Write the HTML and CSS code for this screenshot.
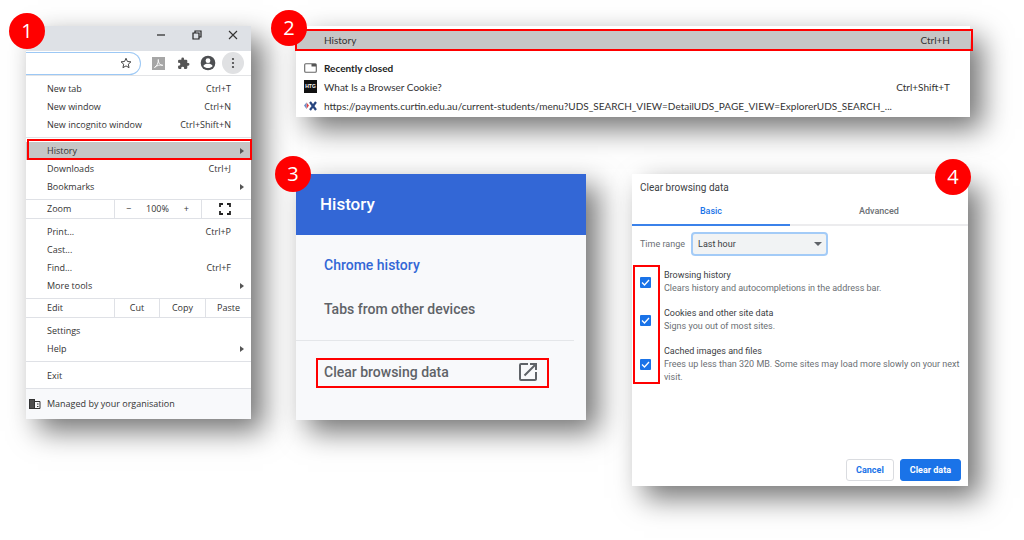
FILE: index.html
```html
<!DOCTYPE html>
<html lang="en">
<head>
<meta charset="utf-8">
<meta name="viewport" content="width=device-width, initial-scale=1">
<title>Clear browsing data in Chrome</title>
<link rel="stylesheet" href="styles.css">
</head>
<body>
<main class="steps">
  <section class="panel menu-panel">
    <span class="badge">1</span>
    <div class="titlebar">
      <button class="icon-btn" aria-label="Minimise"><svg width="10" height="10" viewBox="0 0 10 10"><path d="M1 5h8" stroke="#333" stroke-width="1.3"/></svg></button>
      <button class="icon-btn" aria-label="Restore"><svg width="10" height="10" viewBox="0 0 10 10" fill="none" stroke="#222" stroke-width="1.2"><path d="M1 3h6v6H1zM3 3V1h6v6H7"/></svg></button>
      <button class="icon-btn" aria-label="Close"><svg width="10" height="10" viewBox="0 0 10 10"><path d="M1 1l8 8M9 1L1 9" stroke="#333" stroke-width="1.1"/></svg></button>
    </div>
    <div class="toolbar">
      <div class="omnibox">
        <input class="omnibox-input" type="text" aria-label="Address">
        <svg width="12" height="12" viewBox="0 0 24 24" fill="none" stroke="#444" stroke-width="2"><path d="M12 2.500l2.900 6.500 7 .7-5.300 4.700 1.500 7L12 17.800l-6.100 3.600 1.500-7L2.100 9.700l7-.7z"/></svg>
      </div>
      <button class="icon-btn" aria-label="PDF"><svg width="13" height="13" viewBox="0 0 13 13"><path fill="#a6a6a6" d="M0 0h13v13H0z"/><path d="M2.500 10.500C5 9 6.500 6 6.300 2.500 6.300 6 8 8.500 10.800 8.300 8 7.500 5 8.300 2.500 10.500z" fill="none" stroke="#fff" stroke-width=".9"/></svg></button>
      <button class="icon-btn" aria-label="Extensions"><svg width="13" height="13" viewBox="0 0 24 24" fill="#555"><path d="M20.500 11H19V7a2 2 0 0 0-2-2h-4V3.500a2.500 2.500 0 0 0-5 0V5H4a2 2 0 0 0-2 2v3.800h1.500a2.700 2.700 0 0 1 0 5.400H2V20c0 1.100.9 2 2 2h3.800v-1.500a2.700 2.700 0 0 1 5.400 0V22H17a2 2 0 0 0 2-2v-4h1.500a2.500 2.500 0 0 0 0-5z"/></svg></button>
      <button class="icon-btn" aria-label="Profile"><svg width="16" height="16" viewBox="0 0 24 24"><circle cx="12" cy="12" r="11" fill="#4d4f52"/><circle cx="12" cy="8.500" r="3.600" fill="#fff"/><path d="M5 16.500c1-3 4-3.500 7-3.500s6 .5 7 3.500c-2 2.500-4 3-7 3s-5-.5-7-3z" fill="#fff"/></svg></button>
      <button class="icon-btn more-btn" aria-label="More"><svg width="4" height="12" viewBox="0 0 4 12" fill="#444"><circle cx="2" cy="2" r="1.100"/><circle cx="2" cy="6" r="1.100"/><circle cx="2" cy="10" r="1.100"/></svg></button>
    </div>
    <div class="group">
      <button class="item"><span>New tab</span><span>Ctrl+T</span></button>
      <button class="item"><span>New window</span><span>Ctrl+N</span></button>
      <button class="item"><span>New incognito window</span><span>Ctrl+Shift+N</span></button>
    </div>
    <div class="group">
      <button class="item submenu current"><span>History</span></button>
      <button class="item"><span>Downloads</span><span>Ctrl+J</span></button>
      <button class="item submenu"><span>Bookmarks</span></button>
    </div>
    <div class="split zoom">
      <span class="split-label">Zoom</span>
      <div class="zoom-controls"><button class="cell" aria-label="Zoom out">−</button><span>100%</span><button class="cell" aria-label="Zoom in">+</button></div>
      <button class="cell full" aria-label="Full screen"><svg width="12" height="12" viewBox="0 0 12 12" fill="none" stroke="#222" stroke-width="1.800"><path d="M1 4V1h3M8 1h3v3M11 8v3H8M4 11H1V8"/></svg></button>
    </div>
    <div class="group">
      <button class="item"><span>Print...</span><span>Ctrl+P</span></button>
      <button class="item"><span>Cast...</span></button>
      <button class="item"><span>Find...</span><span>Ctrl+F</span></button>
      <button class="item submenu"><span>More tools</span></button>
    </div>
    <div class="split edit">
      <span class="split-label">Edit</span>
      <button class="cell">Cut</button><button class="cell">Copy</button><button class="cell">Paste</button>
    </div>
    <div class="group">
      <button class="item"><span>Settings</span></button>
      <button class="item submenu"><span>Help</span></button>
    </div>
    <div class="group exit">
      <button class="item"><span>Exit</span></button>
    </div>
    <div class="managed">
      <svg width="12" height="10" viewBox="0 0 12 10"><path fill="#333" d="M0 0h6v10H0z"/><path d="M6 2.500h5v7H6M8 5h1.500M8 7.500h1.500" fill="none" stroke="#333"/><path d="M1.500 2h1M3.500 2h1M1.500 4h1M3.500 4h1M1.500 6h1M3.500 6h1M1.500 8h1M3.500 8h1" stroke="#bbb" stroke-width=".8"/></svg>
      <span>Managed by your organisation</span>
    </div>
  </section>

  <div class="right">
    <section class="panel recent-panel">
      <span class="badge">2</span>
      <button class="recent-row recent-current"><span></span><span>History</span><span>Ctrl+H</span></button>
      <div class="recent-list">
        <div class="recent-row">
          <svg width="13" height="10" viewBox="0 0 13 10"><rect x=".7" y=".7" width="11.600" height="8.600" rx="1" fill="#fff" stroke="#666" stroke-width="1.100"/><path fill="#555" d="M7.500 1H12v2.500H7.500z"/></svg>
          <strong>Recently closed</strong>
        </div>
        <button class="recent-row">
          <span class="htg">HTG</span>
          <span>What Is a Browser Cookie?</span><span>Ctrl+Shift+T</span>
        </button>
        <button class="recent-row">
          <svg width="13" height="10" viewBox="0 0 13 10"><path d="M6 1l6 8M12 1L6 9" stroke="#27457f" stroke-width="2.200"/><path fill="#e04444" d="M2.500 1.500L5 4.500 2.500 8z"/><path fill="#6d8fc9" d="M2.500 1.500V8L0 4.500z"/></svg>
          <span class="url">https://payments.curtin.edu.au/current-students/menu?UDS_SEARCH_VIEW=DetailUDS_PAGE_VIEW=ExplorerUDS_SEARCH_...</span>
        </button>
      </div>
    </section>

    <div class="lower">
      <section class="panel history-panel">
        <span class="badge">3</span>
        <h2 class="history-head">History</h2>
        <nav class="history-nav">
          <a class="history-link active" href="#history">Chrome history</a>
          <a class="history-link" href="#tabs">Tabs from other devices</a>
        </nav>
        <a class="clear-link" href="#clear"><span>Clear browsing data</span>
          <svg width="24" height="24" viewBox="0 0 24 24" fill="#5f6368"><path d="M19 19H5V5h7V3H5a2 2 0 0 0-2 2v14a2 2 0 0 0 2 2h14c1.100 0 2-.9 2-2v-7h-2v7zM14 3v2h3.600l-9.800 9.800 1.400 1.400L19 6.400V10h2V3h-7z"/></svg>
        </a>
      </section>

      <section class="panel dialog">
        <span class="badge badge-right">4</span>
        <h2 class="dialog-title">Clear browsing data</h2>
        <div class="tabs" role="tablist">
          <button class="tab selected" role="tab" aria-selected="true">Basic</button>
          <button class="tab" role="tab" aria-selected="false">Advanced</button>
        </div>
        <div class="range">
          <label for="range">Time range</label>
          <select id="range" class="range-select"><option>Last hour</option></select>
        </div>
        <div class="options">
          <div class="option">
            <input class="check" type="checkbox" id="c1" checked>
            <label for="c1"><span class="option-name">Browsing history</span>Clears history and autocompletions in the address bar.</label>
          </div>
          <div class="option">
            <input class="check" type="checkbox" id="c2" checked>
            <label for="c2"><span class="option-name">Cookies and other site data</span>Signs you out of most sites.</label>
          </div>
          <div class="option">
            <input class="check" type="checkbox" id="c3" checked>
            <label for="c3"><span class="option-name">Cached images and files</span>Frees up less than 320 MB. Some sites may load more slowly on your next visit.</label>
          </div>
        </div>
        <div class="actions">
          <button class="btn">Cancel</button>
          <button class="btn primary">Clear data</button>
        </div>
      </section>
    </div>
  </div>
</main>
</body>
</html>
```

FILE: styles.css
```css
*, *::before, *::after { box-sizing: border-box; }

body {
  margin: 0;
  background: #fff;
  color: #333;
  font: 9px/18px "Open Sans", "Noto Sans", sans-serif;
}

button, input, select { font: inherit; color: inherit; }
button { border: 0; padding: 0; background: none; }
h2 { margin: 0; font-weight: 500; }
a { text-decoration: none; }
svg { display: block; flex: none; }

.steps {
  display: grid;
  grid-template-columns: 225fr 674fr;
  gap: 45px;
  align-items: start;
  padding: 26px 54px 54px 26px;
}

.right { display: grid; gap: 57px; min-width: 0; }

.lower {
  display: grid;
  grid-template-columns: 290fr 336fr;
  gap: 46px;
  align-items: start;
  padding-right: 2px;
}

.panel {
  position: relative;
  min-width: 0;
  background: #fff;
  box-shadow: 12px 12px 27px rgba(0, 0, 0, 0.55);
}

.badge {
  position: absolute;
  top: -13px;
  left: -17px;
  z-index: 2;
  width: 36px;
  height: 36px;
  border-radius: 50%;
  background: #f00;
  color: #fff;
  font-size: 20px;
  line-height: 36px;
  text-align: center;
}
.recent-panel .badge { top: -16px; left: -25px; }
.history-panel .badge { top: -18px; left: -21px; }
.dialog .badge-right { top: -15px; right: -3px; left: auto; }
.history-panel .badge, .dialog .badge { font-family: "Open Sans", "Noto Sans", sans-serif; font-weight: 400; }

/* Browser menu */
.titlebar {
  display: flex;
  justify-content: flex-end;
  align-items: center;
  gap: 26px;
  height: 25px;
  padding: 0 13px 7px 0;
  background: #dee1e6;
}
.toolbar {
  display: flex;
  align-items: center;
  gap: 9px;
  height: 25px;
  padding-right: 7px;
  border-bottom: 1px solid #e3e4e6;
}
.omnibox {
  display: flex;
  flex: 1;
  align-items: center;
  min-width: 0;
  height: 23px;
  padding-right: 8px;
  border: 1px solid #9cc8f5;
  border-left: 0;
  border-radius: 0 12px 12px 0;
}
.omnibox-input { flex: 1; min-width: 0; height: 18px; border: 0; padding: 0 8px; outline: 0; background: none; }
.icon-btn { display: flex; align-items: center; justify-content: center; }
.toolbar .icon-btn { min-width: 16px; }
.toolbar .more-btn { width: 22px; height: 22px; margin-left: -3px; border-radius: 50%; background: #e0e1e3; }

.group { padding: 4px 0 3px; border-bottom: 1px solid #dfe1e6; }
.item {
  position: relative;
  display: flex;
  justify-content: space-between;
  width: 100%;
  height: 18px;
  padding: 0 20px 0 21px;
  text-align: left;
}
.submenu::after {
  content: "";
  position: absolute;
  top: 6px;
  right: 7px;
  border: 3px solid transparent;
  border-left: 4px solid #555;
  border-right: 0;
}
.current { background: #c6c6c6; }
.current::before {
  content: "";
  position: absolute;
  inset: -3px -1px 0 1px;
  border: 2px solid #f00;
}

.split { display: grid; height: 19px; border-bottom: 1px solid #dfe1e6; }
.split-label { padding-left: 21px; }
.split > * + * { border-left: 1px solid #dfe1e6; }
.zoom { grid-template-columns: 88fr 87fr 50fr; }
.edit { grid-template-columns: 88fr 45fr 46fr 46fr; }
.zoom-controls { display: flex; justify-content: space-between; padding: 0 12px 0 11px; }
.full { display: flex; align-items: center; justify-content: center; padding-right: 3px; }
.exit { padding-top: 5px; }
.managed {
  display: flex;
  align-items: center;
  gap: 6px;
  height: 30px;
  padding-left: 3px;
  background: #f8f9fb;
}

/* Recent tabs */
.recent-panel { padding: 4px 0 2px; }
.recent-row {
  display: grid;
  grid-template-columns: 13px auto 1fr;
  gap: 7px;
  align-items: center;
  width: 100%;
  height: 19px;
  padding: 0 20px 0 8px;
  font-family: Lato, "Open Sans", sans-serif;
  font-size: 10px;
  text-align: left;
  white-space: nowrap;
}
.recent-row > :nth-child(3) { text-align: right; }
.recent-current { position: relative; height: 20px; background: #c6c6c6; }
.recent-current::before {
  content: "";
  position: absolute;
  inset: -1px -3px -1px -1px;
  border: 2px solid #f00;
}
.recent-list { padding-top: 8px; }
.recent-row strong { color: #222; }
.htg {
  height: 13px;
  background: #111;
  color: #fff;
  font: bold 5px/13px "Liberation Sans", sans-serif;
  text-align: center;
}

/* History sidebar */
.history-panel {
  padding-bottom: 32px;
  background: #f8f9fb;
  color: #5f6368;
  font: 500 14px/44px Roboto, sans-serif;
}
.history-head {
  padding-left: 24px;
  background: #3367d6;
  color: #fff;
  font-size: 17px;
  line-height: 61px;
}
.history-nav {
  display: grid;
  margin-right: 12px;
  padding: 8px 0 9px 28px;
  border-bottom: 1px solid #e4e6e9;
}
.history-link { color: #5f6368; }
.active { color: #3367d6; }
.clear-link {
  display: flex;
  align-items: center;
  justify-content: space-between;
  height: 30px;
  margin: 17px 37px 0 20px;
  padding: 0 7px 3px 6px;
  border: 2px solid #f00;
  color: #5f6368;
}

/* Clear browsing data dialog */
.dialog { color: #6b6f74; font: 9px/13px Roboto, sans-serif; }
.dialog-title {
  padding: 7px 8px 4px;
  color: #3c4043;
  font-size: 10px;
  font-weight: 400;
  line-height: 14px;
}
.tabs { display: grid; grid-template-columns: 158fr 178fr; }
.tab { height: 27px; border-bottom: 2px solid #ececee; font-weight: 500; }
.selected { border-color: #3b82ea; color: #1a73e8; }
.range { display: flex; align-items: center; gap: 6px; padding: 6px 8px 8px; }
.range-select {
  width: 137px;
  height: 24px;
  padding: 0 5px;
  border: 2px solid #a3cbf7;
  border-radius: 4px;
  appearance: none;
  background: #f1f3f4 url("data:image/svg+xml,%3Csvg xmlns='http://www.w3.org/2000/svg' width='8' height='4'%3E%3Cpath d='M0 0h8L4 4z' fill='%235f6368'/%3E%3C/svg%3E") right 4px center no-repeat;
  color: #3c4043;
}
.options { position: relative; display: grid; gap: 12px; padding: 5px 8px 0; }
.options::before {
  content: "";
  position: absolute;
  top: 1px;
  bottom: 0;
  left: 1px;
  width: 27px;
  border: 2px solid #f00;
}
.option { display: flex; align-items: center; gap: 13px; }
.option-name { display: block; color: #3c4043; }
.check {
  flex: none;
  width: 11px;
  height: 11px;
  margin: 0;
  border-radius: 1px;
  appearance: none;
  background: #1a73e8 url("data:image/svg+xml,%3Csvg xmlns='http://www.w3.org/2000/svg' width='11' height='11'%3E%3Cpath d='M2 5.500l2.500 2.500L9 3' fill='none' stroke='white' stroke-width='1.300'/%3E%3C/svg%3E") center no-repeat;
}
.actions { display: flex; justify-content: flex-end; gap: 6px; padding: 75px 7px 5px; }
.btn {
  height: 22px;
  padding: 0 9px;
  border: 1px solid #dadce0;
  border-radius: 3px;
  color: #1a73e8;
  font-weight: 700;
}
.primary { border-color: #1a73e8; background: #1a73e8; color: #fff; }
```
